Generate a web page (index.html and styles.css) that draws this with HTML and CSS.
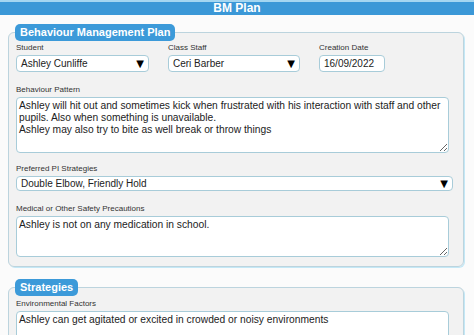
FILE: index.html
```html
<!DOCTYPE html>
<html lang="en">

<head>
  <meta charset="UTF-8" />
  <meta name="viewport" content="width=device-width, initial-scale=1.0" />
  <title>BM Plan</title>
  <link rel="stylesheet" href="styles.css">
</head>

<body>
  <div class="topbar">BM Plan</div>
  <form class="plan">
    <fieldset class="panel">
      <legend>Behaviour Management Plan</legend>
      <div class="row">
        <div class="field student">
          <label>Student</label>
          <div class="select">Ashley Cunliffe<span class="arrow">&#9660;</span></div>
        </div>
        <div class="field staff">
          <label>Class Staff</label>
          <div class="select">Ceri Barber<span class="arrow">&#9660;</span></div>
        </div>
        <div class="field date">
          <label>Creation Date</label>
          <div class="input">16/09/2022</div>
        </div>
      </div>
      <div class="field gap">
        <label>Behaviour Pattern</label>
        <textarea class="text tall" readonly>Ashley will hit out and sometimes kick when frustrated with his interaction with staff and other pupils. Also when something is unavailable.
Ashley may also try to bite as well break or throw things</textarea>
      </div>
      <div class="field gap-sm">
        <label>Preferred PI Strategies</label>
        <div class="select wide">Double Elbow, Friendly Hold<span class="arrow">&#9660;</span></div>
      </div>
      <div class="field gap">
        <label>Medical or Other Safety Precautions</label>
        <textarea class="text short" readonly>Ashley is not on any medication in school.</textarea>
      </div>
    </fieldset>

    <fieldset class="panel">
      <legend>Strategies</legend>
      <div class="field first">
        <label>Environmental Factors</label>
        <textarea class="text tall" readonly>Ashley can get agitated or excited in crowded or noisy environments</textarea>
      </div>
    </fieldset>
  </form>
</body>

</html>
```

FILE: styles.css
```css
* {
  box-sizing: border-box;
}

body {
  margin: 0;
  background-color: #fbfbfb;
  font-family: "Liberation Sans", Arial, sans-serif;
  color: #222;
}

.topbar {
  height: 15px;
  border-top: 2px solid #a4d6f1;
  background-color: #3b98d7;
  color: #fff;
  font-weight: bold;
  font-size: 12px;
  line-height: 13px;
  text-align: center;
}

.panel {
  width: 456px;
  margin: 9px 0 0 8px;
  padding: 0 9px 9px 7px;
  border: 1px solid #bcd4de;
  border-radius: 6px;
  background-color: #f2f2f2;
  box-shadow: 1px 1px 0 #c4e8f6;
}

.panel + .panel {
  margin-top: 12px;
}

.panel legend {
  margin-left: -1px;
  padding: 0 5px;
  height: 17px;
  line-height: 17px;
  border-radius: 5px;
  background-color: #3c9ad9;
  color: #fff;
  font-weight: bold;
  font-size: 11px;
}

.row {
  display: flex;
  gap: 19px;
  margin-top: 2px;
}

.field label {
  display: block;
  font-size: 8px;
  line-height: 10px;
  color: #333;
  margin-bottom: 2px;
}

.field.first {
  margin-top: 3px;
}

.field.gap {
  margin-top: 13px;
}

.field.gap-sm {
  margin-top: 11px;
}

.student {
  width: 133px;
}

.staff {
  width: 132px;
}

.date {
  width: 66px;
}

.select,
.input {
  display: flex;
  justify-content: space-between;
  align-items: center;
  height: 17px;
  padding: 0 4px 0 4px;
  border: 1px solid #a8ccd9;
  border-radius: 4px;
  background-color: #fff;
  font-size: 10px;
}

.select.wide {
  width: 437px;
  height: 15px;
}

.arrow {
  font-family: "DejaVu Sans", sans-serif;
  font-size: 10px;
  line-height: 10px;
  color: #000;
}

.text {
  display: block;
  width: 433px;
  padding: 2px 2px;
  border: 1px solid #a8ccd9;
  border-radius: 4px;
  background-color: #fff;
  font-family: "Liberation Sans", Arial, sans-serif;
  font-size: 10.25px;
  line-height: 12px;
  color: #222;
  outline: none;
}

.text.tall {
  height: 56px;
}

.text.short {
  height: 41px;
}
```
